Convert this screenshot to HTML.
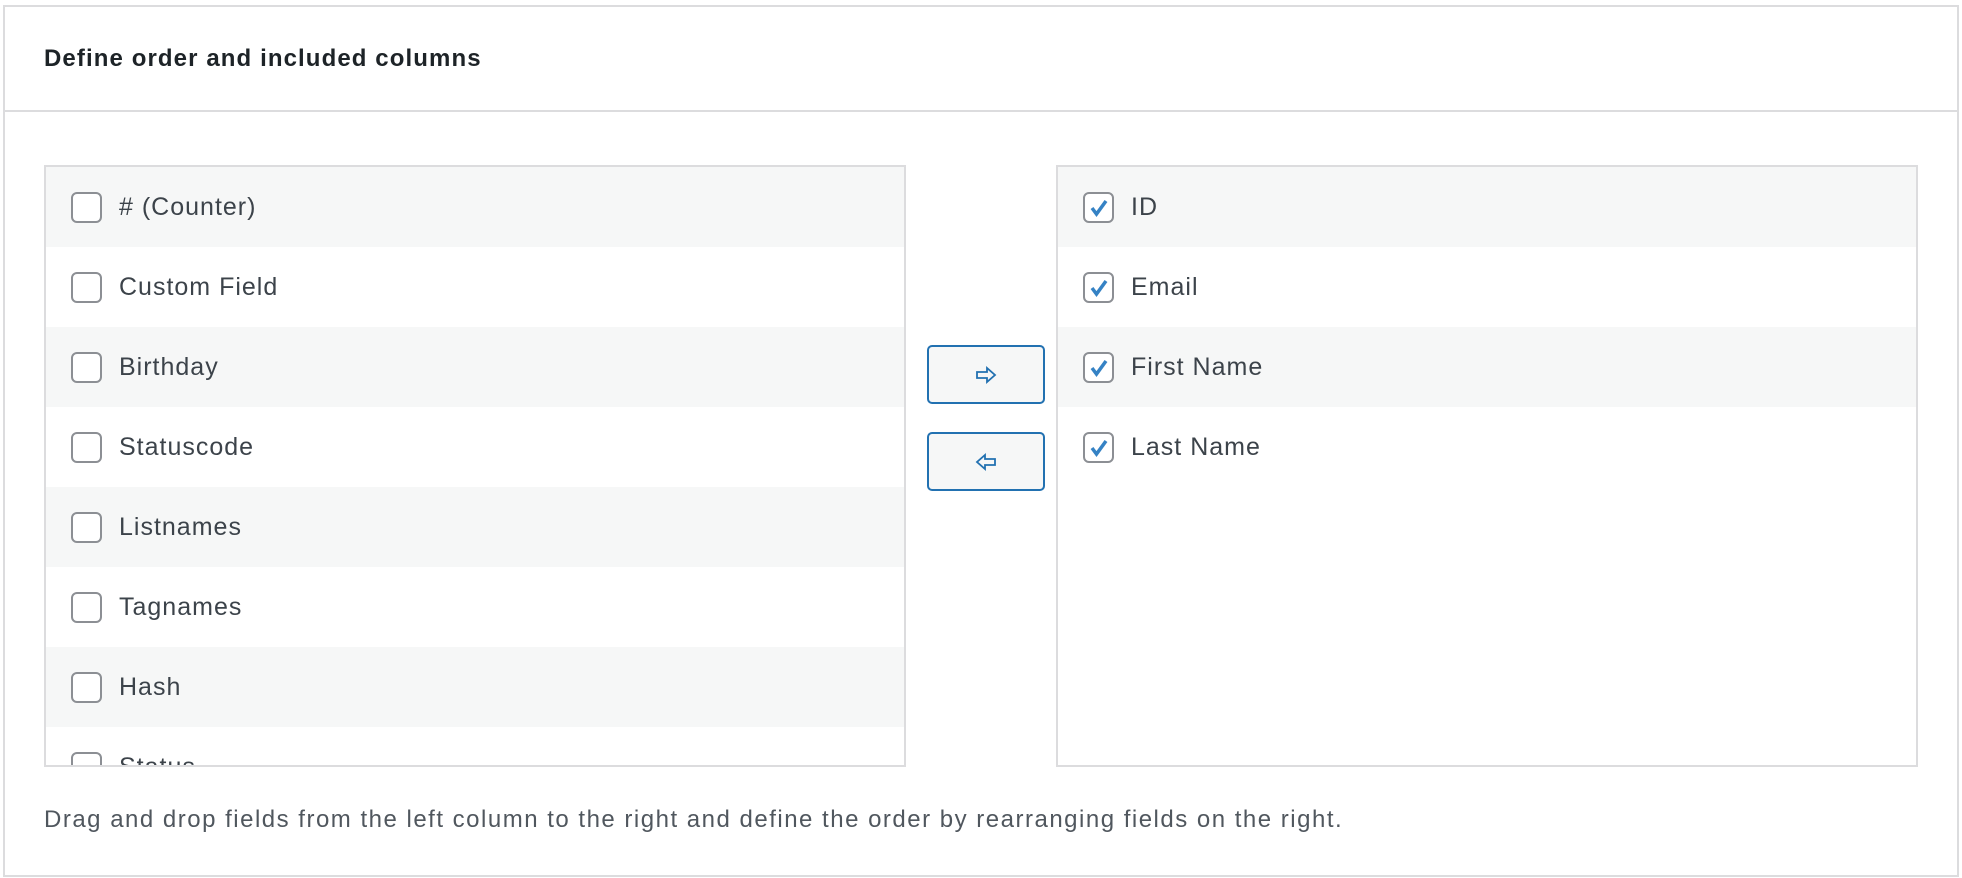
<!DOCTYPE html>
<html><head><meta charset="utf-8"><style>
*{box-sizing:border-box;margin:0;padding:0}
body{width:1962px;height:878px;background:#fff;font-family:"Liberation Sans",sans-serif;position:relative;overflow:hidden;color:#3c434a}
.frame{position:absolute;left:3px;top:5px;width:1956px;height:872px;border:2px solid #dcdcde}
h2{position:absolute;left:44px;top:45px;font-size:24px;letter-spacing:1.1px;font-weight:bold;color:#1d2327;line-height:28px}
.div{position:absolute;left:4px;right:4px;top:110px;height:2px;background:#dcdcde}
.box{position:absolute;top:165px;height:602px;width:862px;border:2px solid #dcdcde;overflow:hidden;background:#fff}
.row{height:80px;display:flex;align-items:center;padding-left:25px;font-size:25px;letter-spacing:1px}
.row:nth-child(odd){background:#f6f7f7}
.cb{width:31px;height:31px;border:2px solid #8c8f94;border-radius:6px;background:#fff;margin-right:17px;flex:none;position:relative}
.cb svg{position:absolute;left:3px;top:3px}
.btn{position:absolute;left:927px;width:118px;height:59px;border:2px solid #2271b1;border-radius:5px;background:#f6f7f7;display:flex;align-items:center;justify-content:center}
.foot{position:absolute;left:44px;top:806px;font-size:24px;letter-spacing:1.5px;color:#50575e}
</style></head><body>
<div class="frame"></div>
<h2>Define order and included columns</h2>
<div class="div"></div>
<div class="box" style="left:44px">
<div class="row"><span class="cb"></span># (Counter)</div>
<div class="row"><span class="cb"></span>Custom Field</div>
<div class="row"><span class="cb"></span>Birthday</div>
<div class="row"><span class="cb"></span>Statuscode</div>
<div class="row"><span class="cb"></span>Listnames</div>
<div class="row"><span class="cb"></span>Tagnames</div>
<div class="row"><span class="cb"></span>Hash</div>
<div class="row"><span class="cb"></span>Status</div>
</div>
<div class="btn" style="top:345px"><svg width="26" height="22" viewBox="0 0 26 22"><path d="M4 8h10V4l8 7-8 7v-4H4z" fill="none" stroke="#2271b1" stroke-width="1.8"/></svg></div>
<div class="btn" style="top:432px"><svg width="26" height="22" viewBox="0 0 26 22"><path d="M22 8H12V4l-8 7 8 7v-4h10z" fill="none" stroke="#2271b1" stroke-width="1.8"/></svg></div>
<div class="box" style="left:1056px">
<div class="row"><span class="cb"><svg width="22" height="22" viewBox="0 0 22 22"><path d="M4 11l4.5 6L18 4" fill="none" stroke="#3582c4" stroke-width="3.5"/></svg></span>ID</div>
<div class="row"><span class="cb"><svg width="22" height="22" viewBox="0 0 22 22"><path d="M4 11l4.5 6L18 4" fill="none" stroke="#3582c4" stroke-width="3.5"/></svg></span>Email</div>
<div class="row"><span class="cb"><svg width="22" height="22" viewBox="0 0 22 22"><path d="M4 11l4.5 6L18 4" fill="none" stroke="#3582c4" stroke-width="3.5"/></svg></span>First Name</div>
<div class="row" style="background:#fff"><span class="cb"><svg width="22" height="22" viewBox="0 0 22 22"><path d="M4 11l4.5 6L18 4" fill="none" stroke="#3582c4" stroke-width="3.5"/></svg></span>Last Name</div>
</div>
<div class="foot">Drag and drop fields from the left column to the right and define the order by rearranging fields on the right.</div>
</body></html>
